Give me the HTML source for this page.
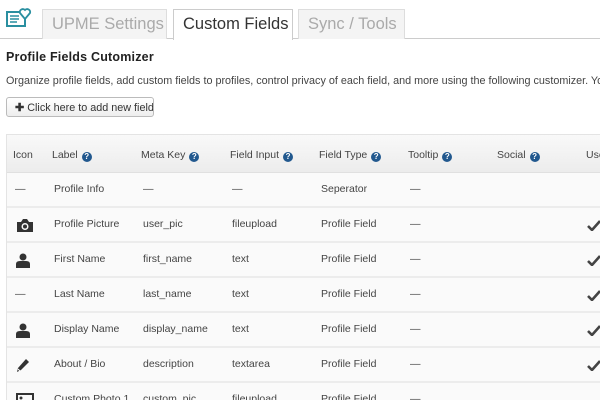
<!DOCTYPE html>
<html><head><meta charset="utf-8"><style>
*{margin:0;padding:0;box-sizing:border-box}
html,body{width:600px;height:400px;overflow:hidden}
body{background:#fff;font-family:"Liberation Sans",Arial,sans-serif;color:#444;position:relative}
.tabs{position:absolute;left:0;top:0;width:600px;height:39px;border-bottom:1px solid #ccc}
.tab{position:absolute;top:9px;height:30px;border:1px solid #ddd;border-bottom:none;background:#f4f4f4;color:#aaa;font-size:16.5px;padding:5px 0 0 9px;white-space:nowrap;overflow:hidden}
.tab.act{background:#fff;color:#333;border-color:#ccc;height:31px}
h2{position:absolute;left:6px;top:50px;font-size:12.5px;font-weight:bold;color:#222;letter-spacing:0.2px}
.intro{position:absolute;left:6px;top:75px;font-size:10.8px;color:#444;white-space:nowrap;width:594px;overflow:hidden}
.btn{position:absolute;left:6px;top:97px;width:148px;height:20px;border:1px solid #bbb;border-radius:3px;background:linear-gradient(#fff,#eee);font-size:10.8px;color:#333;padding:3px 0 0 8px;white-space:nowrap;overflow:hidden}
.tbl{position:absolute;left:6px;top:134px;width:594px;overflow:hidden;border-left:1px solid #e4e4e4;background:#f9f9f9}
.hd{height:39px;background:linear-gradient(#f9f9f9,#ececec);border-top:1px solid #e4e4e4;border-bottom:1px solid #e0e0e0;position:relative}
.row{height:35px;border-bottom:2px solid #ececec;position:relative;background:#fafafa}
.c{position:absolute;font-size:10.5px;color:#444;white-space:nowrap}
.hd .c{top:14px}
.row .c{top:10px}
.q{display:inline-block;width:10px;height:10px;border-radius:50%;background:#21588e;color:#fff;font-size:8px;font-weight:bold;text-align:center;line-height:10px;vertical-align:-1px;margin-left:4px}
.ic{position:absolute;left:9px;top:10px}
.ck{position:absolute;left:580px;top:12px}
</style></head><body>
<div class="tabs">
<svg style="position:absolute;left:6px;top:7px" width="26" height="22" viewBox="0 0 26 22"><rect x="1" y="5" width="18" height="14" fill="none" stroke="#2a8fa0" stroke-width="2"/><path d="M4 9h9M4 12h9M4 15h7" stroke="#2a8fa0" stroke-width="1.5"/><path d="M19 12 L14 6 A3 3 0 0 1 19 3 A3 3 0 0 1 24 6 Z" fill="#fff" stroke="#2a8fa0" stroke-width="1.8"/></svg>
<div class="tab" style="left:42px;width:125px">UPME Settings</div>
<div class="tab act" style="left:173px;width:120px">Custom Fields</div>
<div class="tab" style="left:298px;width:107px">Sync / Tools</div>
</div>
<h2>Profile Fields Cutomizer</h2>
<div class="intro">Organize profile fields, add custom fields to profiles, control privacy of each field, and more using the following customizer. You can drag and drop</div>
<div class="btn"><b style="font-size:11px">✚</b> Click here to add new field</div>
<div class="tbl">
<div class="hd">
<span class="c" style="left:6px">Icon</span>
<span class="c" style="left:45px">Label<span class="q">?</span></span>
<span class="c" style="left:134px">Meta Key<span class="q">?</span></span>
<span class="c" style="left:223px">Field Input<span class="q">?</span></span>
<span class="c" style="left:312px">Field Type<span class="q">?</span></span>
<span class="c" style="left:401px">Tooltip<span class="q">?</span></span>
<span class="c" style="left:490px">Social<span class="q">?</span></span>
<span class="c" style="left:579px">User</span>
</div>
<div class="row"><span class="c" style="left:8px">—</span><span class="c" style="left:47px">Profile Info</span><span class="c" style="left:136px">—</span><span class="c" style="left:225px">—</span><span class="c" style="left:314px">Seperator</span><span class="c" style="left:403px">—</span></div>
<div class="row"><svg class="ic" width="18" height="15" viewBox="0 0 18 15"><path d="M1 4h4l2-3h4l2 3h4v10H1z" fill="#333"/><circle cx="9" cy="8.5" r="3.5" fill="#fafafa"/><circle cx="9" cy="8.5" r="2" fill="#333"/></svg><span class="c" style="left:47px">Profile Picture</span><span class="c" style="left:136px">user_pic</span><span class="c" style="left:225px">fileupload</span><span class="c" style="left:314px">Profile Field</span><span class="c" style="left:403px">—</span><svg class="ck" width="14" height="11" viewBox="0 0 14 11"><path d="M1 6l4 4 8-9" fill="none" stroke="#444" stroke-width="2.6"/></svg></div>
<div class="row"><svg class="ic" width="14" height="15" viewBox="0 0 14 15"><circle cx="7" cy="4" r="3.5" fill="#333"/><path d="M0 15v-4q0-3 4-3h6q4 0 4 3v4z" fill="#333"/></svg><span class="c" style="left:47px">First Name</span><span class="c" style="left:136px">first_name</span><span class="c" style="left:225px">text</span><span class="c" style="left:314px">Profile Field</span><span class="c" style="left:403px">—</span><svg class="ck" width="14" height="11" viewBox="0 0 14 11"><path d="M1 6l4 4 8-9" fill="none" stroke="#444" stroke-width="2.6"/></svg></div>
<div class="row"><span class="c" style="left:8px">—</span><span class="c" style="left:47px">Last Name</span><span class="c" style="left:136px">last_name</span><span class="c" style="left:225px">text</span><span class="c" style="left:314px">Profile Field</span><span class="c" style="left:403px">—</span><svg class="ck" width="14" height="11" viewBox="0 0 14 11"><path d="M1 6l4 4 8-9" fill="none" stroke="#444" stroke-width="2.6"/></svg></div>
<div class="row"><svg class="ic" width="14" height="15" viewBox="0 0 14 15"><circle cx="7" cy="4" r="3.5" fill="#333"/><path d="M0 15v-4q0-3 4-3h6q4 0 4 3v4z" fill="#333"/></svg><span class="c" style="left:47px">Display Name</span><span class="c" style="left:136px">display_name</span><span class="c" style="left:225px">text</span><span class="c" style="left:314px">Profile Field</span><span class="c" style="left:403px">—</span><svg class="ck" width="14" height="11" viewBox="0 0 14 11"><path d="M1 6l4 4 8-9" fill="none" stroke="#444" stroke-width="2.6"/></svg></div>
<div class="row"><svg class="ic" width="14" height="15" viewBox="0 0 14 15"><path d="M10 1l3 3-8 8-4 2 1-4z" fill="#333"/><path d="M2 11l2 2" stroke="#fafafa" stroke-width="1"/></svg><span class="c" style="left:47px">About / Bio</span><span class="c" style="left:136px">description</span><span class="c" style="left:225px">textarea</span><span class="c" style="left:314px">Profile Field</span><span class="c" style="left:403px">—</span><svg class="ck" width="14" height="11" viewBox="0 0 14 11"><path d="M1 6l4 4 8-9" fill="none" stroke="#444" stroke-width="2.6"/></svg></div>
<div class="row"><svg class="ic" width="18" height="15" viewBox="0 0 18 15"><rect x="1" y="1" width="16" height="13" fill="none" stroke="#333" stroke-width="2"/><circle cx="5" cy="5" r="1.5" fill="#333"/><path d="M3 12l4-4 3 3 2-2 3 3z" fill="#333"/></svg><span class="c" style="left:47px">Custom Photo 1</span><span class="c" style="left:136px">custom_pic</span><span class="c" style="left:225px">fileupload</span><span class="c" style="left:314px">Profile Field</span><span class="c" style="left:403px">—</span></div>
</div>
</body></html>
